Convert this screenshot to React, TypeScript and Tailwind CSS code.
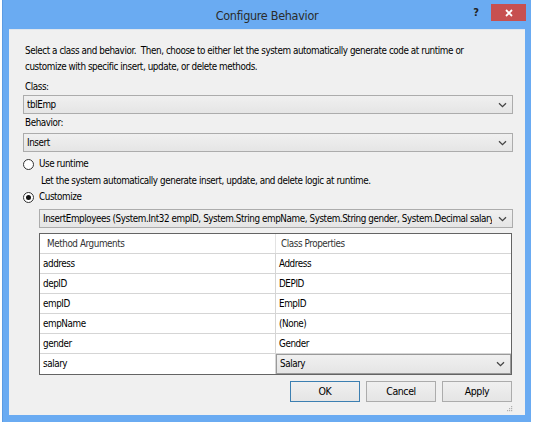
import React from "react";

const font = {
  fontFamily: '"DejaVu Sans Condensed", "Liberation Sans", sans-serif',
};

function Chevron() {
  return (
    <svg width="9" height="6" viewBox="0 0 9 6" className="shrink-0">
      <path d="M1 1.2 L4.5 4.6 L8 1.2" fill="none" stroke="#444" strokeWidth="1.3" />
    </svg>
  );
}

function Select({ text, className = "" }: { text: string; className?: string }) {
  return (
    <div
      className={`h-[19px] border border-[#acacac] bg-gradient-to-b from-[#f0f0f0] to-[#e5e5e5] flex items-center pl-[3px] pr-[5px] ${className}`}
    >
      <span className="flex-1 overflow-hidden whitespace-nowrap text-black leading-[17px] mr-[6px]">{text}</span>
      <Chevron />
    </div>
  );
}

function Radio({ checked }: { checked?: boolean }) {
  return (
    <div className="w-[11px] h-[11px] rounded-full border border-[#333] bg-white flex items-center justify-center shrink-0">
      {checked && <div className="w-[5px] h-[5px] rounded-full bg-[#111]" />}
    </div>
  );
}

const rows: [string, string][] = [
  ["address", "Address"],
  ["depID", "DEPID"],
  ["empID", "EmpID"],
  ["empName", "(None)"],
  ["gender", "Gender"],
];

export default function App() {
  return (
    <div className="w-[534px] h-[426px] bg-white overflow-hidden" style={font}>
      <div className="ml-[2px] w-[529px] h-[422px] bg-[#6aabf2] border-l border-[#5b9be3] flex flex-col pl-[6px] pr-[6px] pb-[7px]">
        {/* title bar */}
        <div className="h-[29px] grid grid-cols-[1fr_auto_1fr] items-start">
          <div />
          <div className="pt-[7px] text-[12.5px] tracking-[-0.3px] leading-[18px] text-[#2b2b2b]">Configure Behavior</div>
          <div className="flex justify-end items-start">
            <div className="mt-[6px] mr-[12px] text-[11px] font-bold text-[#222] leading-[14px]">?</div>
            <div className="mt-[4px] w-[35px] h-[17px] bg-[#c75050] flex items-center justify-center mr-[-1px]">
              <svg width="8" height="8" viewBox="0 0 8 8">
                <path d="M1 1 L7 7 M7 1 L1 7" stroke="#fff" strokeWidth="1.8" />
              </svg>
            </div>
          </div>
        </div>
        {/* content */}
        <div className="flex-1 bg-[#f0f0f0] border-t border-[#dfe6ee] pl-[14px] pr-[12px] pt-[13px] text-[9.8px] tracking-[-0.42px] text-black flex flex-col">
          <p className="pl-[2px] leading-[16px] whitespace-nowrap">
            Select a class and behavior.&nbsp; Then, choose to either let the system automatically generate code at runtime or
            <br />
            customize with specific insert, update, or delete methods.
          </p>
          <div className="mt-[3px] pl-[2px] h-[17px] leading-[17px]">Class:</div>
          <Select text="tblEmp" />
          <div className="pl-[2px] h-[17px] leading-[17px]">Behavior:</div>
          <Select text="Insert" className="mt-[2px]" />
          <div className="mt-[4px] h-[16px] flex items-center gap-[5px]">
            <Radio />
            <span className="leading-[16px]">Use runtime</span>
          </div>
          <div className="pl-[18px] h-[17px] leading-[17px]">
            Let the system automatically generate insert, update, and delete logic at runtime.
          </div>
          <div className="h-[16px] flex items-center gap-[5px]">
            <Radio checked />
            <span className="leading-[16px]">Customize</span>
          </div>
          <Select
            className="mt-[4px] ml-[16px]"
            text="InsertEmployees (System.Int32 empID, System.String empName, System.String gender, System.Decimal salary)"
          />
          <div className="mt-[5px] ml-[16px] mr-[1px] border border-[#646464] bg-white">
            <div className="grid grid-cols-[236px_1fr] h-[20px] border-b border-[#d5d5d5] text-[#333]">
              <div className="pl-[7px] leading-[19px] border-r border-[#e3e3e3]">Method Arguments</div>
              <div className="pl-[5px] leading-[19px]">Class Properties</div>
            </div>
            {rows.map(([a, b]) => (
              <div key={a} className="grid grid-cols-[236px_1fr] h-[20px] border-b border-[#d5d5d5]">
                <div className="pl-[3px] leading-[19px] border-r border-[#d5d5d5]">{a}</div>
                <div className="pl-[3px] leading-[19px]">{b}</div>
              </div>
            ))}
            <div className="grid grid-cols-[236px_1fr] h-[20px]">
              <div className="pl-[3px] leading-[20px] border-r border-[#d5d5d5]">salary</div>
              <div className="border border-[#9a9a9a] bg-gradient-to-b from-[#f0f0f0] to-[#e5e5e5] flex items-center pl-[3px] pr-[5px]">
                <span className="flex-1 leading-[18px]">Salary</span>
                <Chevron />
              </div>
            </div>
          </div>
          <div className="mt-[6px] flex justify-end gap-[6px] pr-[1px]">
            <button className="w-[70px] h-[21px] border border-[#3c7fb1] bg-gradient-to-b from-[#f0f0f0] to-[#e5e5e5] text-[10.5px] text-black leading-[19px]">
              OK
            </button>
            <button className="w-[70px] h-[21px] border border-[#acacac] bg-gradient-to-b from-[#f0f0f0] to-[#e5e5e5] text-[10.5px] text-black leading-[19px]">
              Cancel
            </button>
            <button className="w-[70px] h-[21px] border border-[#acacac] bg-gradient-to-b from-[#f0f0f0] to-[#e5e5e5] text-[10.5px] text-black leading-[19px]">
              Apply
            </button>
          </div>
          <div className="flex-1 flex justify-end items-end pb-[3px]">
            <svg width="7" height="7" viewBox="0 0 7 7">
              <rect x="5" y="1" width="1.2" height="1.2" fill="#b0b0b0" />
              <rect x="3" y="3" width="1.2" height="1.2" fill="#b0b0b0" />
              <rect x="5" y="3" width="1.2" height="1.2" fill="#b0b0b0" />
              <rect x="1" y="5" width="1.2" height="1.2" fill="#b0b0b0" />
              <rect x="3" y="5" width="1.2" height="1.2" fill="#b0b0b0" />
              <rect x="5" y="5" width="1.2" height="1.2" fill="#b0b0b0" />
            </svg>
          </div>
        </div>
      </div>
    </div>
  );
}
